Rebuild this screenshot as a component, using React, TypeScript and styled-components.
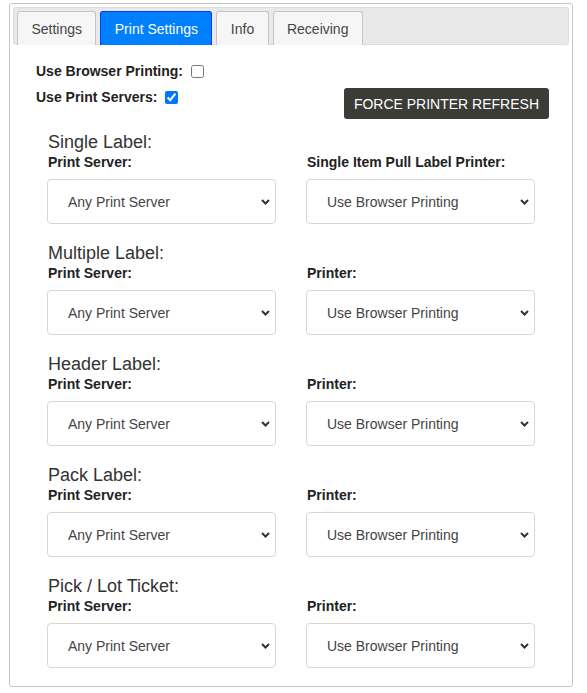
import React, { useState } from 'react'
import styled, { createGlobalStyle } from 'styled-components'

const GlobalStyle = createGlobalStyle`
  body {
    margin: 0;
    background: #ffffff;
    font-family: "Liberation Sans", Arial, sans-serif;
    color: #333333;
  }
`

const tabs = ['Settings', 'Print Settings', 'Info', 'Receiving']

const sections = [
  { title: 'Single Label:', printerLabel: 'Single Item Pull Label Printer:' },
  { title: 'Multiple Label:', printerLabel: 'Printer:' },
  { title: 'Header Label:', printerLabel: 'Printer:' },
  { title: 'Pack Label:', printerLabel: 'Printer:' },
  { title: 'Pick / Lot Ticket:', printerLabel: 'Printer:' },
]

const Chevron = () => (
  <svg width='9' height='6' viewBox='0 0 9 6'>
    <path d='M1 1 L4.5 4.5 L8 1' fill='none' stroke='#333' strokeWidth='2' />
  </svg>
)

const SelectBox = ({ options }: { options: string[] }) => (
  <SelectWrap>
    <Select defaultValue={options[0]}>
      {options.map((o) => (
        <option key={o}>{o}</option>
      ))}
    </Select>
    <Arrow>
      <Chevron />
    </Arrow>
  </SelectWrap>
)

const App = () => {
  const [activeTab, setActiveTab] = useState(1)
  const [browserPrinting, setBrowserPrinting] = useState(false)
  const [printServers, setPrintServers] = useState(true)

  return (
    <>
      <GlobalStyle />
      <Card>
        <TabBar>
          {tabs.map((t, i) => (
            <Tab key={t} active={i === activeTab} onClick={() => setActiveTab(i)}>
              {t}
            </Tab>
          ))}
        </TabBar>
        <Content>
          <TopRow>
            <Checks>
              <CheckRow>
                <CheckLabel>Use Browser Printing:</CheckLabel>
                <Check
                  type='checkbox'
                  checked={browserPrinting}
                  onChange={(e) => setBrowserPrinting(e.target.checked)}
                />
              </CheckRow>
              <CheckRow>
                <CheckLabel>Use Print Servers:</CheckLabel>
                <Check
                  type='checkbox'
                  checked={printServers}
                  onChange={(e) => setPrintServers(e.target.checked)}
                />
              </CheckRow>
            </Checks>
            <RefreshButton>FORCE PRINTER REFRESH</RefreshButton>
          </TopRow>
          {/* блоки с выбором принтеров */}
          {sections.map((s) => (
            <Section key={s.title}>
              <SectionTitle>{s.title}</SectionTitle>
              <Columns>
                <Field>
                  <FieldLabel>Print Server:</FieldLabel>
                  <SelectBox options={['Any Print Server']} />
                </Field>
                <Field>
                  <FieldLabel>{s.printerLabel}</FieldLabel>
                  <SelectBox options={['Use Browser Printing']} />
                </Field>
              </Columns>
            </Section>
          ))}
        </Content>
      </Card>
    </>
  )
}

const Card = styled.div`
  box-sizing: border-box;
  width: 564px;
  margin: 3px 0 0 9px;
  padding: 3px;
  border: 1px solid #c5c5c5;
  border-radius: 3px;
  background: #ffffff;
`
const TabBar = styled.div`
  display: flex;
  gap: 4px;
  height: 38px;
  box-sizing: border-box;
  padding: 4px 3px 0;
  border: 1px solid #dddddd;
  border-radius: 3px;
  background: #e9e9e9;
  align-items: flex-end;
`
const Tab = styled.div<{ active: boolean }>`
  box-sizing: border-box;
  height: 34px;
  margin-bottom: -1px;
  padding: 0 13.4px;
  display: flex;
  align-items: center;
  font-size: 14px;
  border: 1px solid ${(p) => (p.active ? '#003eff' : '#c5c5c5')};
  border-bottom: none;
  border-radius: 3px 3px 0 0;
  background: ${(p) => (p.active ? '#007fff' : '#f6f6f6')};
  color: ${(p) => (p.active ? '#ffffff' : '#454545')};
  cursor: pointer;
`
const Content = styled.div`
  padding: 13px 20px 15px 23px;
`
const TopRow = styled.div`
  display: flex;
  justify-content: space-between;
  align-items: flex-start;
`
const Checks = styled.div`
  display: flex;
  flex-direction: column;
`
const CheckRow = styled.div`
  display: flex;
  align-items: center;
  gap: 8px;
  height: 26px;
`
const CheckLabel = styled.span`
  font-size: 14px;
  font-weight: bold;
  color: #222222;
`
const Check = styled.input`
  width: 13px;
  height: 13px;
  margin: 0;
  accent-color: #0075ff;
`
const RefreshButton = styled.button`
  margin-top: 30px;
  height: 31px;
  padding: 0 10px;
  border: none;
  border-radius: 3px;
  background: #3b3b37;
  color: #ffffff;
  font-family: "Liberation Sans", Arial, sans-serif;
  font-size: 14px;
  cursor: pointer;
`
const Section = styled.div`
  margin: 12px 0 0 11px;
  & + & {
    margin-top: 18px;
  }
`
const SectionTitle = styled.div`
  font-size: 18px;
  line-height: 22px;
  color: #333333;
  padding-left: 1px;
`
const Columns = styled.div`
  display: grid;
  grid-template-columns: 229px 229px;
  column-gap: 30px;
`
const Field = styled.div`
  display: flex;
  flex-direction: column;
`
const FieldLabel = styled.div`
  font-size: 14px;
  font-weight: bold;
  line-height: 18px;
  color: #222222;
  padding-left: 1px;
  margin-bottom: 8px;
`
const SelectWrap = styled.div`
  position: relative;
`
const Select = styled.select`
  appearance: none;
  box-sizing: border-box;
  width: 100%;
  height: 45px;
  padding: 0 30px 0 20px;
  border: 1px solid #ddd6cc;
  border-radius: 4px;
  background: #ffffff;
  color: #444444;
  font-family: "Liberation Sans", Arial, sans-serif;
  font-size: 14px;
  outline: none;
`
const Arrow = styled.span`
  position: absolute;
  right: 6px;
  top: 50%;
  transform: translateY(-50%);
  display: flex;
  pointer-events: none;
`

export default App
